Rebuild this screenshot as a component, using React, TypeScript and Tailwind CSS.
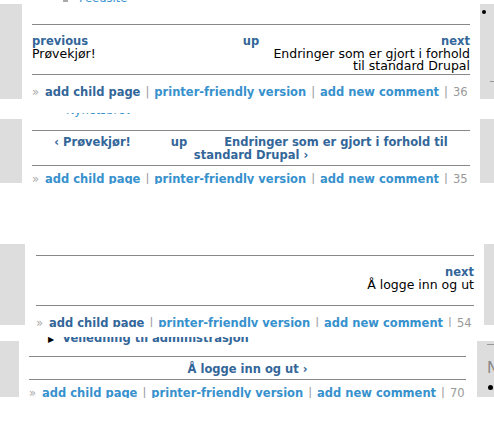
import React from "react";

const DARK = "text-[#336699]";
const LIGHT = "text-[#3791cd]";

type LinksProps = { count: string; childDark?: boolean };

const NodeLinks = ({ count, childDark }: LinksProps) => (
	<div className="text-[11.5px] leading-[14px] whitespace-nowrap">
		<span className="text-[#aaaaaa] mr-[6px]">»</span>
		<a className={`font-bold ${childDark ? DARK : LIGHT}`}>add child page</a>
		<span className="text-[#999999] mx-[5px]">|</span>
		<a className={`font-bold ${LIGHT}`}>printer-friendly version</a>
		<span className="text-[#999999] mx-[5px]">|</span>
		<a className={`font-bold ${LIGHT}`}>add new comment</a>
		<span className="text-[#999999] mx-[5px]">|</span>
		<span className="text-[#999999]">{count}</span>
	</div>
);

const Rule = ({ className = "" }: { className?: string }) => (
	<div className={`border-t border-[#888888] ${className}`} />
);

export default function App() {
	return (
		<div className="w-[494px] h-[422px] bg-white overflow-hidden font-['DejaVu_Sans',sans-serif] text-black">
			{/* snippet 1: old style book navigation */}
			<div className="flex h-[100px] overflow-hidden">
				<div className="w-[22px] shrink-0 mt-[4px] h-[95px] bg-[#dddddd]" />
				<div className="ml-[10px] w-[438px] shrink-0">
					<div className="-mt-[9px] h-[14px] flex items-center text-[11.5px] leading-[14px]">
						<span className="ml-[31px] mt-[2px] w-[5px] h-[5px] bg-[#aaaaaa]" />
						<span className={`ml-[11px] ${LIGHT}`}>Feedsite</span>
					</div>
					<Rule className="mt-[19px]" />
					<div className="pt-[9px] grid grid-cols-[197px_44px_197px] text-[11.5px] leading-[14px] font-bold">
						<a className={DARK}>previous</a>
						<a className={`${DARK} text-center`}>up</a>
						<a className={`${DARK} text-right`}>next</a>
					</div>
					<div className="grid grid-cols-[197px_41px_200px] text-[12.5px] leading-[12px]">
						<div>Prøvekjør!</div>
						<div />
						<div className="text-right">Endringer som er gjort i forhold til standard Drupal</div>
					</div>
					<Rule className="mt-[2px]" />
					<div className="mt-[10px]">
						<NodeLinks count="36" childDark />
					</div>
				</div>
				<div className="ml-[10px] w-[14px] shrink-0 mt-[4px] h-[95px] bg-[#dddddd] flex flex-col">
					<span className="ml-[2px] mt-[6px] w-[4px] h-[4px] rounded-full bg-black" />
					<div className="ml-[10px] mt-[67px] border-t border-[#999999]" />
				</div>
			</div>

			{/* snippet 2: centered page links */}
			<div className="flex mt-[13px] h-[71px] overflow-hidden">
				<div className="w-[22px] shrink-0 mt-[6px] h-[64px] bg-[#dddddd]" />
				<div className="ml-[10px] w-[438px] shrink-0">
					<div className="-mt-[10px] h-[14px] text-[11.5px] leading-[14px]">
						<span className={`ml-[34px] ${LIGHT}`}>Nyhetsbrev</span>
					</div>
					<Rule className="mt-[13px]" />
					<div className="pt-[5px] text-center text-[11.5px] leading-[13px] font-bold">
						<a className={DARK}>‹ Prøvekjør!</a>
						<a className={`${DARK} ml-[40px] mr-[37px]`}>up</a>
						<a className={DARK}>Endringer som er gjort i forhold til standard Drupal ›</a>
					</div>
					<Rule className="mt-[3px]" />
					<div className="mt-[6px]">
						<NodeLinks count="35" />
					</div>
				</div>
				<div className="ml-[10px] w-[14px] shrink-0 mt-[6px] h-[64px] bg-[#dddddd]" />
			</div>

			{/* snippet 3: only next link */}
			<div className="flex mt-[60px] h-[83px] overflow-hidden">
				<div className="w-[25px] shrink-0 h-[81px] bg-[#dddddd]" />
				<div className="ml-[11px] w-[438px] shrink-0">
					<Rule className="mt-[11px]" />
					<div className="pt-[9px] grid grid-cols-[197px_44px_197px] text-[11.5px] leading-[14px] font-bold">
						<div />
						<div />
						<a className={`${DARK} text-right`}>next</a>
					</div>
					<div className="grid grid-cols-[197px_41px_200px] text-[12.5px] leading-[12px] h-[24px]">
						<div />
						<div />
						<div className="text-right">Å logge inn og ut</div>
					</div>
					<Rule className="mt-[2px]" />
					<div className="mt-[10px]">
						<NodeLinks count="54" childDark />
					</div>
				</div>
				<div className="ml-[10px] w-[10px] shrink-0 h-[81px] bg-[#dddddd]" />
			</div>

			{/* snippet 4: single centered link */}
			<div className="flex mt-[10px] h-[61px] overflow-hidden">
				<div className="w-[19px] shrink-0 mt-[4px] h-[56px] bg-[#dddddd]" />
				<div className="ml-[10px] w-[437px] shrink-0">
					<div className="-mt-[6px] h-[14px] flex items-center text-[11.5px] leading-[14px] font-bold">
						<span className="ml-[19px] mt-[4px] text-[8px] leading-none text-black">▶</span>
						<span className={`ml-[8px] ${DARK}`}>Veiledning til administrasjon</span>
					</div>
					<Rule className="mt-[11px]" />
					<div className="pt-[6px] text-center text-[11.5px] leading-[13px] font-bold">
						<a className={DARK}>Å logge inn og ut ›</a>
					</div>
					<Rule className="mt-[3px]" />
					<div className="mt-[6px]">
						<NodeLinks count="70" />
					</div>
				</div>
				<div className="ml-[11px] w-[17px] shrink-0 mt-[4px] h-[56px] bg-[#dddddd] flex flex-col">
					<div className="ml-[10px] mt-[3px] border-t border-[#999999]" />
					<span className="ml-[10px] mt-[14px] text-[15px] leading-[18px] text-[#888888]">N</span>
					<span className="ml-[11px] mt-[8px] w-[5px] h-[5px] rounded-full bg-black" />
				</div>
			</div>
		</div>
	);
}
